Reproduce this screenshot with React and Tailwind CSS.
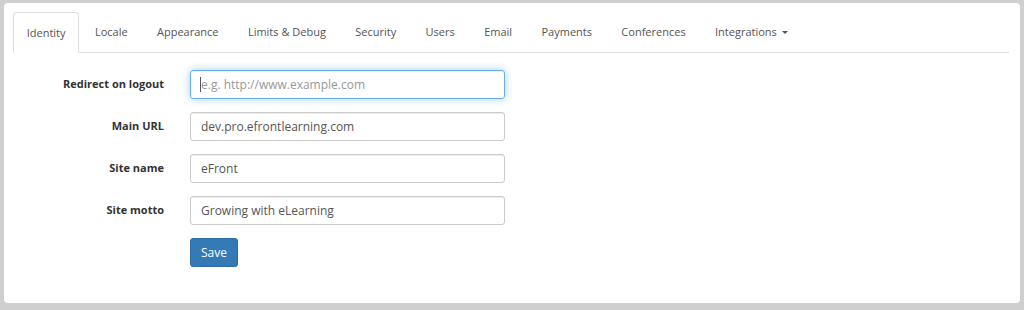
import React from 'react';

const tabs = ['Identity', 'Locale', 'Appearance', 'Limits & Debug', 'Security', 'Users', 'Email', 'Payments', 'Conferences', 'Integrations'];

const fields = [
  { label: 'Main URL', value: 'dev.pro.efrontlearning.com' },
  { label: 'Site name', value: 'eFront' },
  { label: 'Site motto', value: 'Growing with eLearning' },
];

export default function App() {
  return (
    <div
      className="w-[1024px] h-[310px] bg-[#cfcfcf] pt-[3px] px-[4px] pb-[7px] text-[#555]"
      style={{ fontFamily: '"Open Sans", "Liberation Sans", sans-serif' }}
    >
      <div className="h-full bg-white rounded-[4px] pt-[9px] px-[9px]">
        {/* Tabs */}
        <div className="flex border-b border-[#dddddd] h-[41px] mr-[2px]">
          {tabs.map((t, i) => (
            <div
              key={t}
              className={`px-[12.7px] mr-[2px] pt-px flex items-center text-[11px] rounded-t-[4px] ${
                i === 0 ? 'border border-[#dddddd] border-b-white -mb-px bg-white' : 'border border-transparent'
              }`}
            >
              {t}
              {t === 'Integrations' && (
                <span className="ml-[5px] inline-block w-0 h-0 border-l-[3px] border-r-[3px] border-t-[3px] border-l-transparent border-r-transparent border-t-[#555]" />
              )}
            </div>
          ))}
        </div>

        {/* Form */}
        <div className="pt-[17px] flex flex-col gap-[13px]">
          <div className="flex items-center">
            <label className="w-[151px] text-right text-[11px] font-bold text-[#333]">Redirect on logout</label>
            <div className="ml-[26px] relative">
              <input
                className="w-[315px] h-[29px] rounded-[3px] border border-[#66afe9] px-[10px] text-[12px] outline-none shadow-[inset_0_1px_1px_rgba(0,0,0,0.075),0_0_8px_rgba(102,175,233,0.6)] placeholder:text-[#999]"
                placeholder="e.g. http://www.example.com"
                readOnly
              />
              <span className="absolute left-[10px] top-[7px] w-px h-[15px] bg-[#555]" />
            </div>
          </div>
          {fields.map((f) => (
            <div key={f.label} className="flex items-center">
              <label className="w-[151px] text-right text-[11px] font-bold text-[#333]">{f.label}</label>
              <input
                className="ml-[26px] w-[315px] h-[29px] rounded-[3px] border border-[#cccccc] px-[10px] text-[12px] text-[#555] outline-none shadow-[inset_0_1px_1px_rgba(0,0,0,0.075)]"
                defaultValue={f.value}
                readOnly
              />
            </div>
          ))}
          <div className="flex">
            <button className="ml-[177px] w-[48px] h-[29px] rounded-[3px] bg-[#337ab7] border border-[#2e6da4] text-white text-[12px]">
              Save
            </button>
          </div>
        </div>
      </div>
    </div>
  );
}
